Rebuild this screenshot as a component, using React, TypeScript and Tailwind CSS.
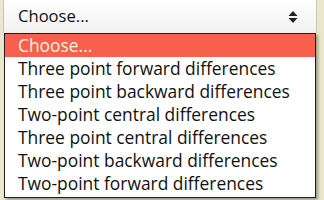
import React from "react";

const items = [
  "Choose...",
  "Three point forward differences",
  "Three point backward differences",
  "Two-point central differences",
  "Three point central differences",
  "Two-point backward differences",
  "Two-point forward differences",
];

export default function App() {
  return (
    <div
      className="w-[324px] h-[200px] bg-[#ebe7cd] overflow-hidden"
      style={{ fontFamily: '"Open Sans", "Noto Sans", sans-serif' }}
    >
      <div className="ml-[3px] w-[314px] h-[33px] border-l border-r border-[#c9c6b4] bg-gradient-to-b from-white to-[#f1f1f1] flex items-center justify-between pl-[14px] pr-[18px] text-[16.6px] text-[#111]">
        <span>Choose...</span>
        <svg width="10" height="14" viewBox="0 0 10 14">
          <path d="M5 1 L9.5 6 H0.5 Z" fill="#222" />
          <path d="M5 13 L9.5 8 H0.5 Z" fill="#222" />
        </svg>
      </div>
      <div className="ml-[4px] w-[312px] border border-[#1f1f1f] bg-white pb-[2px] shadow-[2px_2px_3px_rgba(0,0,0,0.35)]">
        {items.map((t, i) => (
          <div
            key={t}
            className={
              i === 0
                ? "h-[23px] flex items-center pl-[13px] text-[17.4px] bg-[#f7604c] text-[#fdf0e0]"
                : "h-[23px] flex items-center pl-[13px] text-[17.4px] text-[#111]"
            }
          >
            {t}
          </div>
        ))}
      </div>
    </div>
  );
}
